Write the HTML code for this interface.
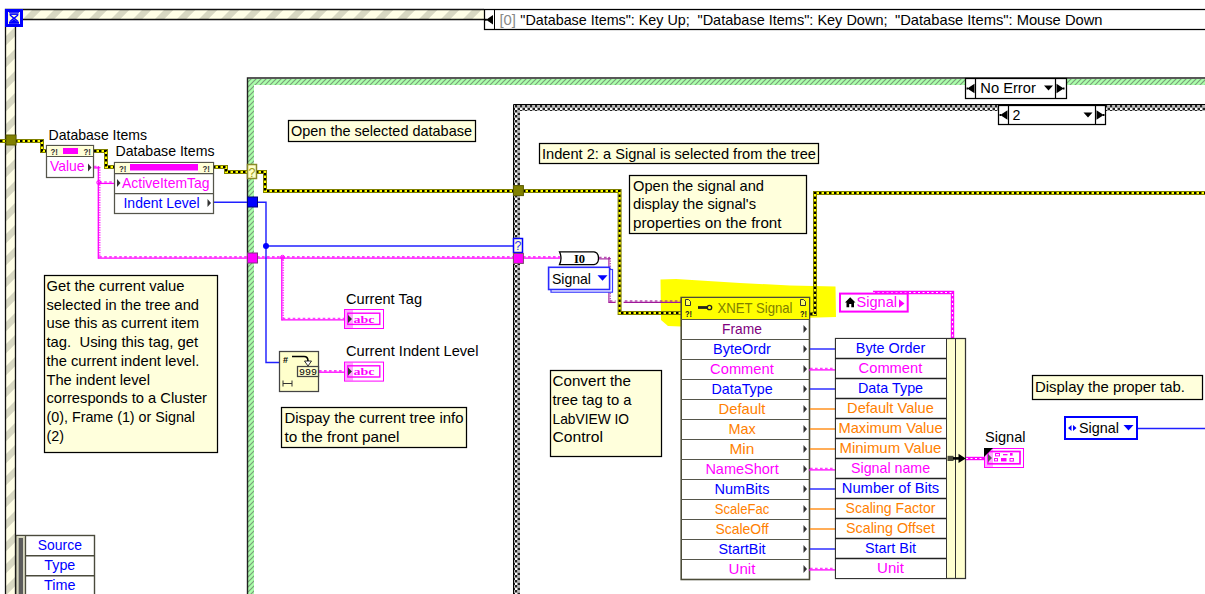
<!DOCTYPE html>
<html lang="en"><head><meta charset="utf-8"><title>Block diagram</title>
<style>html,body{margin:0;padding:0;background:#fff;overflow:hidden}svg{display:block}text{font-family:"Liberation Sans", sans-serif;white-space:pre}</style>
</head><body>
<svg width="1205" height="594" viewBox="0 0 1205 594">
<defs>
<pattern id="ev" patternUnits="userSpaceOnUse" width="22" height="22"><rect width="22" height="22" fill="#fffee6"/><path d="M0 0 H7.3 L0 7.3 Z M20 0 H22 V7.3 L7.3 22 H0 V20 Z M22 20 V22 H20 Z" fill="#d8d8c2"/></pattern>
<pattern id="gr" patternUnits="userSpaceOnUse" width="5" height="5"><rect width="5" height="5" fill="#aaffaa"/><path d="M-1 6 L6 -1 M-1 1 L1 -1 M4 6 L6 4" stroke="#7a9e7a" stroke-width="1.15"/></pattern>
<pattern id="ck" patternUnits="userSpaceOnUse" width="5" height="5"><rect width="5" height="5" fill="#fff"/><rect x="0" y="0" width="2.5" height="2.5" fill="#222"/><rect x="2.5" y="2.5" width="2.5" height="2.5" fill="#222"/><rect x="2.5" y="0" width="2.5" height="2.5" fill="#bbb"/></pattern>
</defs>
<rect width="1205" height="594" fill="#fff"/>
<path d="M660.5 279.5 L676 279 L700 280.5 L740 283 L790 285.5 L835.5 286.5 L836 317 L800 318 L740 321 L700 324.5 L681 326.5 L668 326 L661 320 Z" fill="#ffff00"/>
<rect x="6" y="10" width="478" height="9" fill="url(#ev)" />
<rect x="6" y="10" width="9" height="584" fill="url(#ev)" />
<path d="M5.5 594 V9.5 H484" stroke="#111" stroke-width="1.3" fill="none" />
<path d="M15.5 594 V19.5 H484" stroke="#111" stroke-width="1.3" fill="none" />
<rect x="5" y="9" width="18" height="18" fill="#0000ff" />
<rect x="8" y="12" width="12" height="12" fill="#ffffd8" />
<rect x="9" y="12" width="10" height="0.8" fill="#0000ff" />
<rect x="9.5" y="13.3" width="9" height="1.6" fill="#0000ff" />
<path d="M10 15 L14 18.3 L18 15 M14 18 L10 21.5 M14 18 L18 21.5" stroke="#0000ff" stroke-width="1.4" fill="none"/>
<path d="M14 19 L17.5 22 H10.5 Z" fill="#0000ff"/>
<rect x="9" y="21.6" width="10" height="2.2" fill="#0000ff" />
<rect x="484.5" y="9.5" width="725" height="20" fill="#fff" stroke="#000" stroke-width="1.25" />
<path d="M494.5 9.5 V29.5" stroke="#000" stroke-width="1" fill="none" />
<path d="M493 15 V24.400 L486.8 20.2 V20.700 H485 V18.700 H486.8 V19.2 Z" fill="#000"/>
<text x="499.5" y="25" fill="#888" font-size="14.6" textLength="16.5" lengthAdjust="spacingAndGlyphs" >[0]</text>
<text x="520.3" y="25" fill="#000" font-size="14.6" textLength="169.5" lengthAdjust="spacingAndGlyphs" >"Database Items": Key Up;</text>
<text x="697.5" y="25" fill="#000" font-size="14.6" textLength="190" lengthAdjust="spacingAndGlyphs" >"Database Items": Key Down;</text>
<text x="895" y="25" fill="#000" font-size="14.6" textLength="207.5" lengthAdjust="spacingAndGlyphs" >"Database Items": Mouse Down</text>
<rect x="248" y="79" width="960" height="6" fill="url(#gr)" />
<rect x="248" y="79" width="6" height="520" fill="url(#gr)" />
<path d="M247.5 594 V78 H1205" stroke="#222" stroke-width="1.4" fill="none" />
<rect x="965.5" y="78.5" width="101" height="20" fill="#fff" stroke="#000" stroke-width="1.25" />
<path d="M975.5 78 V99 M1055.5 78 V99" stroke="#000" stroke-width="1.2" fill="none" />
<path d="M974.5 83.800 V93.200 L968 88.9 V89.500 H966.5 V87.500 H968 V88.100 Z M1056.5 83.800 V93.200 L1063 88.9 V89.500 H1064.5 V87.500 H1063 V88.100 Z M1044 85.500 H1053 L1048.5 90.5 Z" fill="#000"/>
<text x="980.3" y="93.4" fill="#000" font-size="14.6" textLength="55.5" lengthAdjust="spacingAndGlyphs" >No Error</text>
<rect x="514" y="105" width="700" height="6" fill="url(#ck)" />
<rect x="514" y="105" width="6" height="500" fill="url(#ck)" />
<path d="M513.5 594 V104.5 H1205" stroke="#000" stroke-width="1" fill="none" />
<rect x="998.5" y="105.5" width="107" height="19" fill="#fff" stroke="#000" stroke-width="1.25" />
<path d="M1008.5 105 V125 M1095.500 105 V125" stroke="#000" stroke-width="1.2" fill="none" />
<path d="M1007.5 110.3 V119.7 L1001 115.4 V116 H999.5 V114 H1001 V114.6 Z M1096.5 110.3 V119.7 L1103 115.4 V116 H1104.5 V114 H1103 V114.6 Z M1083.5 112.5 H1092.5 L1088 117.5 Z" fill="#000"/>
<text x="1012.5" y="120.3" fill="#000" font-size="14.6" textLength="7.9" lengthAdjust="spacingAndGlyphs" >2</text>
<path d="M0 141 H42 V151 H47" stroke="#808000" stroke-width="4" fill="none" stroke-linejoin="miter"/>
<path d="M0 141 H42 V151 H47" stroke="#ffff00" stroke-width="2" fill="none" />
<path d="M0 141 H42 V151 H47" stroke="#000" stroke-width="2" fill="none" stroke-dasharray="2.5 2.5"/>
<path d="M94 151 H106 V167 H114" stroke="#808000" stroke-width="4" fill="none" stroke-linejoin="miter"/>
<path d="M94 151 H106 V167 H114" stroke="#ffff00" stroke-width="2" fill="none" />
<path d="M94 151 H106 V167 H114" stroke="#000" stroke-width="2" fill="none" stroke-dasharray="2.5 2.5"/>
<path d="M213 167 H226 V172 H247" stroke="#808000" stroke-width="4" fill="none" stroke-linejoin="miter"/>
<path d="M213 167 H226 V172 H247" stroke="#ffff00" stroke-width="2" fill="none" />
<path d="M213 167 H226 V172 H247" stroke="#000" stroke-width="2" fill="none" stroke-dasharray="2.5 2.5"/>
<path d="M256 172 H265 V191 H514" stroke="#808000" stroke-width="4" fill="none" stroke-linejoin="miter"/>
<path d="M256 172 H265 V191 H514" stroke="#ffff00" stroke-width="2" fill="none" />
<path d="M256 172 H265 V191 H514" stroke="#000" stroke-width="2" fill="none" stroke-dasharray="2.5 2.5"/>
<path d="M598.0 258.9 H610.3" stroke="#a0189a" stroke-width="1.1" fill="none"/>
<path d="M599.0 257.5 H609.8" stroke="#a0189a" stroke-width="1.3" stroke-dasharray="2.6 2.4" fill="none" opacity="0.75"/>
<path d="M608.9 257.0 V303.0" stroke="#a0189a" stroke-width="1.1" fill="none"/>
<path d="M610.3 258.0 V301.5" stroke="#a0189a" stroke-width="1.3" stroke-dasharray="1.3 1.2" fill="none" opacity="0.75"/>
<path d="M608.8 302.4 H681.5" stroke="#a0189a" stroke-width="1.1" fill="none"/>
<path d="M609.8 301.0 H681.0" stroke="#a0189a" stroke-width="1.3" stroke-dasharray="2.6 2.4" fill="none" opacity="0.75"/>
<path d="M619.6 294 V308" stroke="#fff" stroke-width="8" fill="none" />
<path d="M523 191 H619.6 V313 H681" stroke="#808000" stroke-width="4" fill="none" stroke-linejoin="miter"/>
<path d="M523 191 H619.6 V313 H681" stroke="#ffff00" stroke-width="2" fill="none" />
<path d="M523 191 H619.6 V313 H681" stroke="#000" stroke-width="2" fill="none" stroke-dasharray="2.5 2.5"/>
<path d="M810 314 H815 V193 H1205" stroke="#808000" stroke-width="4" fill="none" stroke-linejoin="miter"/>
<path d="M810 314 H815 V193 H1205" stroke="#ffff00" stroke-width="2" fill="none" />
<path d="M810 314 H815 V193 H1205" stroke="#000" stroke-width="2" fill="none" stroke-dasharray="2.5 2.5"/>
<rect x="6" y="135" width="10" height="10" fill="#808000" stroke="#5a5a00" stroke-width="1" />
<rect x="513.4" y="185.6" width="10" height="10" fill="#808000" stroke="#5a5a00" stroke-width="1" />
<path d="M93.0 167.9 H99.7" stroke="#ff00ff" stroke-width="1.3" fill="none"/>
<path d="M94.0 166.5 H99.2" stroke="#ff00ff" stroke-width="1.7" stroke-dasharray="2.6 2.4" fill="none" opacity="0.75"/>
<path d="M98.3 166.0 V258.8" stroke="#ff00ff" stroke-width="1.3" fill="none"/>
<path d="M99.7 167.0 V257.3" stroke="#ff00ff" stroke-width="1.7" stroke-dasharray="1.3 1.2" fill="none" opacity="0.75"/>
<path d="M98.2 258.2 H247.5" stroke="#ff00ff" stroke-width="1.3" fill="none"/>
<path d="M99.2 256.8 H247.0" stroke="#ff00ff" stroke-width="1.7" stroke-dasharray="2.6 2.4" fill="none" opacity="0.75"/>
<path d="M98.2 183.4 H114.5" stroke="#ff00ff" stroke-width="1.3" fill="none"/>
<path d="M99.2 182.0 H114.0" stroke="#ff00ff" stroke-width="1.7" stroke-dasharray="2.6 2.4" fill="none" opacity="0.75"/>
<path d="M256.0 258.2 H514.5" stroke="#ff00ff" stroke-width="1.3" fill="none"/>
<path d="M257.0 256.8 H514.0" stroke="#ff00ff" stroke-width="1.7" stroke-dasharray="2.6 2.4" fill="none" opacity="0.75"/>
<path d="M281.8 256.3 V320.5" stroke="#ff00ff" stroke-width="1.3" fill="none"/>
<path d="M283.2 257.3 V319.0" stroke="#ff00ff" stroke-width="1.7" stroke-dasharray="1.3 1.2" fill="none" opacity="0.75"/>
<path d="M281.7 319.9 H344.5" stroke="#ff00ff" stroke-width="1.3" fill="none"/>
<path d="M282.7 318.5 H344.0" stroke="#ff00ff" stroke-width="1.7" stroke-dasharray="2.6 2.4" fill="none" opacity="0.75"/>
<path d="M522.0 258.2 H560.5" stroke="#ff00ff" stroke-width="1.3" fill="none"/>
<path d="M523.0 256.8 H560.0" stroke="#ff00ff" stroke-width="1.7" stroke-dasharray="2.6 2.4" fill="none" opacity="0.75"/>
<path d="M318.0 372.2 H344.5" stroke="#ff00ff" stroke-width="1.3" fill="none"/>
<path d="M319.0 370.8 H344.0" stroke="#ff00ff" stroke-width="1.7" stroke-dasharray="2.6 2.4" fill="none" opacity="0.75"/>
<circle cx="98.8" cy="182.500" r="2" fill="none" stroke="#ff00ff"/>
<circle cx="282.5" cy="257.3" r="2" fill="none" stroke="#ff00ff"/>
<path d="M214 202.3 H247" stroke="#2020ff" stroke-width="1.45" fill="none" />
<path d="M257 202.3 H266 V362.500 H279" stroke="#2020ff" stroke-width="1.45" fill="none" />
<path d="M266 246 H514" stroke="#2020ff" stroke-width="1.45" fill="none" />
<circle cx="266" cy="246" r="3" fill="#0000ff"/>
<path d="M1138 428.500 H1205" stroke="#2020ff" stroke-width="1.45" fill="none" />
<rect x="247.5" y="164.5" width="9" height="14" fill="#ffffc8" stroke="#8a8a28" stroke-width="1.5" />
<text x="252" y="176.5" fill="#9a9a10" font-size="12.5" text-anchor="middle" >?</text>
<rect x="247.5" y="197" width="10" height="10" fill="#0000ff" stroke="#000080" stroke-width="1" />
<rect x="247.5" y="253" width="10" height="10" fill="#ff00ff" stroke="#803080" stroke-width="1" />
<rect x="513.5" y="238.5" width="9" height="14" fill="#ffffd8" stroke="#0000ff" stroke-width="1.5" />
<text x="518" y="250" fill="#3030ff" font-size="12.5" text-anchor="middle" >?</text>
<rect x="513.4" y="253.4" width="10" height="10" fill="#ff00ff" stroke="#7a4a6a" stroke-width="1" />
<text x="48.5" y="140" fill="#000" font-size="14.6" textLength="98.5" lengthAdjust="spacingAndGlyphs" >Database Items</text>
<rect x="46.5" y="145.5" width="47" height="32" fill="#fff" stroke="#55554a" stroke-width="1.25" />
<rect x="47" y="146" width="46" height="10" fill="#ffffd8" />
<path d="M46 156.5 H94" stroke="#55554a" stroke-width="1" fill="none" />
<rect x="63" y="148" width="15" height="6" fill="#ff00ff" />
<text x="50.5" y="155" fill="#333" font-size="9" textLength="7.5" lengthAdjust="spacingAndGlyphs" font-weight="bold" >?!</text>
<text x="83.5" y="155" fill="#333" font-size="9" textLength="7.5" lengthAdjust="spacingAndGlyphs" font-weight="bold" >?!</text>
<text x="50" y="171" fill="#ff00ff" font-size="14.6" textLength="34.5" lengthAdjust="spacingAndGlyphs" >Value</text>
<path d="M88 163.5 V171.500 L91.5 167.500 Z" fill="#333"/>
<text x="115.5" y="156" fill="#000" font-size="14.6" textLength="99" lengthAdjust="spacingAndGlyphs" >Database Items</text>
<rect x="114.5" y="162.5" width="99" height="51" fill="#fff" stroke="#55554a" stroke-width="1.25" />
<rect x="115" y="163" width="98" height="10" fill="#fff" />
<rect x="115" y="163" width="15" height="10" fill="#ffffd8" />
<rect x="198" y="163" width="15" height="10" fill="#ffffd8" />
<path d="M114 173.500 H214 M114 193.500 H214" stroke="#55554a" stroke-width="1.25" fill="none" />
<rect x="130" y="164" width="68" height="6.5" fill="#ff00ff" />
<text x="119" y="171.5" fill="#333" font-size="9" textLength="7.5" lengthAdjust="spacingAndGlyphs" font-weight="bold" >?!</text>
<text x="202.5" y="171.5" fill="#333" font-size="9" textLength="7.5" lengthAdjust="spacingAndGlyphs" font-weight="bold" >?!</text>
<text x="122" y="187.5" fill="#ff00ff" font-size="14.6" textLength="87.5" lengthAdjust="spacingAndGlyphs" >ActiveItemTag</text>
<path d="M117 179 V187 L120.5 183 Z" fill="#333"/>
<text x="123.5" y="207.5" fill="#0000ff" font-size="14.6" textLength="76" lengthAdjust="spacingAndGlyphs" >Indent Level</text>
<path d="M207.5 199 V207 L211 203 Z" fill="#333"/>
<rect x="44.5" y="275.5" width="173" height="177" fill="#ffffdc" stroke="#000" stroke-width="1.25" />
<text x="46.5" y="290.8" fill="#000" font-size="14.6" textLength="138" lengthAdjust="spacingAndGlyphs" >Get the current value</text>
<text x="46.5" y="309.6" fill="#000" font-size="14.6" textLength="152.5" lengthAdjust="spacingAndGlyphs" >selected in the tree and</text>
<text x="46.5" y="328.3" fill="#000" font-size="14.6" textLength="152.5" lengthAdjust="spacingAndGlyphs" >use this as current item</text>
<text x="46.5" y="347.1" fill="#000" font-size="14.6" textLength="151.5" lengthAdjust="spacingAndGlyphs" >tag.  Using this tag, get</text>
<text x="46.5" y="365.8" fill="#000" font-size="14.6" textLength="152.8" lengthAdjust="spacingAndGlyphs" >the current indent level.</text>
<text x="46.5" y="384.6" fill="#000" font-size="14.6" textLength="103.5" lengthAdjust="spacingAndGlyphs" >The indent level</text>
<text x="46.5" y="403.3" fill="#000" font-size="14.6" textLength="160.5" lengthAdjust="spacingAndGlyphs" >corresponds to a Cluster</text>
<text x="46.5" y="422.1" fill="#000" font-size="14.6" textLength="148.5" lengthAdjust="spacingAndGlyphs" >(0), Frame (1) or Signal</text>
<text x="46.5" y="440.8" fill="#000" font-size="14.6" textLength="17.5" lengthAdjust="spacingAndGlyphs" >(2)</text>
<rect x="288.5" y="120.5" width="187" height="21" fill="#ffffdc" stroke="#000" stroke-width="1.25" />
<text x="291" y="136.0" fill="#000" font-size="14.6" textLength="181" lengthAdjust="spacingAndGlyphs" >Open the selected database</text>
<rect x="281.5" y="407.5" width="185" height="40" fill="#ffffdc" stroke="#000" stroke-width="1.25" />
<text x="284.5" y="423.3" fill="#000" font-size="14.6" textLength="179" lengthAdjust="spacingAndGlyphs" >Dispay the current tree info</text>
<text x="284.5" y="441.7" fill="#000" font-size="14.6" textLength="115" lengthAdjust="spacingAndGlyphs" >to the front panel</text>
<rect x="539.5" y="143.5" width="279" height="20" fill="#ffffdc" stroke="#000" stroke-width="1.25" />
<text x="542" y="158.5" fill="#000" font-size="14.6" textLength="274" lengthAdjust="spacingAndGlyphs" >Indent 2: a Signal is selected from the tree</text>
<rect x="629.5" y="175.5" width="177" height="58" fill="#ffffdc" stroke="#000" stroke-width="1.25" />
<text x="633" y="190.5" fill="#000" font-size="14.6" textLength="131" lengthAdjust="spacingAndGlyphs" >Open the signal and</text>
<text x="633" y="209.3" fill="#000" font-size="14.6" textLength="123" lengthAdjust="spacingAndGlyphs" >display the signal's</text>
<text x="633" y="228.1" fill="#000" font-size="14.6" textLength="148.5" lengthAdjust="spacingAndGlyphs" >properties on the front</text>
<rect x="550.5" y="370.5" width="111" height="86" fill="#ffffdc" stroke="#000" stroke-width="1.25" />
<text x="552.5" y="386.0" fill="#000" font-size="14.6" textLength="78.5" lengthAdjust="spacingAndGlyphs" >Convert the</text>
<text x="552.5" y="404.8" fill="#000" font-size="14.6" textLength="79" lengthAdjust="spacingAndGlyphs" >tree tag to a</text>
<text x="552.5" y="423.5" fill="#000" font-size="14.6" textLength="76.5" lengthAdjust="spacingAndGlyphs" >LabVIEW IO</text>
<text x="552.5" y="442.2" fill="#000" font-size="14.6" textLength="50.5" lengthAdjust="spacingAndGlyphs" >Control</text>
<rect x="1032.5" y="375.5" width="170" height="24" fill="#ffffdc" stroke="#000" stroke-width="1.25" />
<text x="1035" y="391.5" fill="#000" font-size="14.6" textLength="150" lengthAdjust="spacingAndGlyphs" >Display the proper tab.</text>
<text x="346" y="303.5" fill="#000" font-size="14.6" textLength="76" lengthAdjust="spacingAndGlyphs" >Current Tag</text>
<rect x="344.5" y="309.5" width="39" height="19" fill="#fff" stroke="#ff00ff" stroke-width="1" />
<rect x="347.8" y="313.2" width="32" height="11.2" fill="#fff" stroke="#ff00ff" stroke-width="1.4" />
<rect x="345" y="310" width="8" height="18" fill="#ff00ff" opacity=".35"/>
<text x="353.5" y="322.6" fill="#ff00ff" font-size="10" textLength="21" lengthAdjust="spacingAndGlyphs" font-weight="bold" style='font-family:"Liberation Serif", serif' >abc</text>
<path d="M348 315 V323 L352 319 Z" fill="#333"/>
<text x="346" y="355.6" fill="#000" font-size="14.6" textLength="132.5" lengthAdjust="spacingAndGlyphs" >Current Indent Level</text>
<rect x="344.5" y="362.1" width="39" height="19" fill="#fff" stroke="#ff00ff" stroke-width="1" />
<rect x="347.8" y="365.8" width="32" height="11.2" fill="#fff" stroke="#ff00ff" stroke-width="1.4" />
<rect x="345" y="362.6" width="8" height="18" fill="#ff00ff" opacity=".35"/>
<text x="353.5" y="375.20000000000005" fill="#ff00ff" font-size="10" textLength="21" lengthAdjust="spacingAndGlyphs" font-weight="bold" style='font-family:"Liberation Serif", serif' >abc</text>
<path d="M348 367.6 V375.6 L352 371.6 Z" fill="#333"/>
<rect x="279.5" y="351.5" width="39" height="40" fill="#ffffcc" stroke="#444" stroke-width="1.25" />
<text x="283" y="363" fill="#000" font-size="9" font-weight="bold" >#</text>
<path d="M292 356.500 H304 Q308 356.500 308 361 V364" stroke="#000" stroke-width="1.6" fill="none" />
<path d="M304.5 361 H311.500 L308 366 Z" fill="#fff" stroke="#000" stroke-width="0.8"/>
<rect x="297.5" y="366.5" width="21" height="10" fill="#ffffcc" stroke="#444" stroke-width="1.25" />
<text x="299" y="375" fill="#000" font-size="9" textLength="18" lengthAdjust="spacingAndGlyphs" style='font-family:"Liberation Mono", monospace' >999</text>
<path d="M283 380.5 V386.5 M292 380.5 V386.5 M283 383.5 H292" stroke="#333" stroke-width="1" fill="none" />
<path d="M559.5 251.8 H594 Q598.5 252.5 598.5 258.2 Q598.5 264 594 264.600 H559.5 Q562.5 258.2 559.5 251.8 Z" fill="#fff" stroke="#000" stroke-width="1.3"/>
<text x="579.5" y="262.5" fill="#000" font-size="12.5" text-anchor="middle" font-weight="bold" style='font-family:"Liberation Serif", serif' >I0</text>
<rect x="551" y="269.5" width="61.5" height="22.7" fill="#fff" stroke="#3a3aff" stroke-width="1.2" />
<rect x="548.6" y="267.3" width="61" height="22.2" fill="#fff" stroke="#2a2aff" stroke-width="1.6" />
<text x="552" y="283.5" fill="#000" font-size="14.6" textLength="39" lengthAdjust="spacingAndGlyphs" >Signal</text>
<path d="M597.500 275.3 H607.500 L602.5 280.8 Z" fill="#0000ff"/>
<rect x="681.2" y="297.5" width="128.29999999999995" height="282" fill="#fff" stroke="#4c4c38" stroke-width="1.6" />
<rect x="682" y="298" width="127" height="21" fill="#ffff00" />
<path d="M681 319.5 H810" stroke="#55554a" stroke-width="1" fill="none" />
<text x="722.0" y="333.5" fill="#800080" font-size="14.6" textLength="39.9" lengthAdjust="spacingAndGlyphs" >Frame</text>
<path d="M803.500 325 V333 L807 329 Z" fill="#333"/>
<path d="M681 339.5 H810" stroke="#55554a" stroke-width="1" fill="none" />
<text x="713.1" y="353.5" fill="#0000ff" font-size="14.6" textLength="57.8" lengthAdjust="spacingAndGlyphs" >ByteOrdr</text>
<path d="M803.500 345 V353 L807 349 Z" fill="#333"/>
<path d="M681 359.5 H810" stroke="#55554a" stroke-width="1" fill="none" />
<text x="710.1" y="373.5" fill="#ff00ff" font-size="14.6" textLength="63.7" lengthAdjust="spacingAndGlyphs" >Comment</text>
<path d="M803.500 365 V373 L807 369 Z" fill="#333"/>
<path d="M681 379.5 H810" stroke="#55554a" stroke-width="1" fill="none" />
<text x="711.5" y="393.5" fill="#0000ff" font-size="14.6" textLength="61.1" lengthAdjust="spacingAndGlyphs" >DataType</text>
<path d="M803.500 385 V393 L807 389 Z" fill="#333"/>
<path d="M681 399.5 H810" stroke="#55554a" stroke-width="1" fill="none" />
<text x="718.6" y="413.5" fill="#ff8000" font-size="14.6" textLength="46.7" lengthAdjust="spacingAndGlyphs" >Default</text>
<path d="M803.500 405 V413 L807 409 Z" fill="#333"/>
<path d="M681 419.5 H810" stroke="#55554a" stroke-width="1" fill="none" />
<text x="728.4" y="433.5" fill="#ff8000" font-size="14.6" textLength="27.3" lengthAdjust="spacingAndGlyphs" >Max</text>
<path d="M803.500 425 V433 L807 429 Z" fill="#333"/>
<path d="M681 439.5 H810" stroke="#55554a" stroke-width="1" fill="none" />
<text x="729.5" y="453.5" fill="#ff8000" font-size="14.6" textLength="24.9" lengthAdjust="spacingAndGlyphs" >Min</text>
<path d="M803.500 445 V453 L807 449 Z" fill="#333"/>
<path d="M681 459.5 H810" stroke="#55554a" stroke-width="1" fill="none" />
<text x="705.4" y="473.5" fill="#ff00ff" font-size="14.6" textLength="73.3" lengthAdjust="spacingAndGlyphs" >NameShort</text>
<path d="M803.500 465 V473 L807 469 Z" fill="#333"/>
<path d="M681 479.5 H810" stroke="#55554a" stroke-width="1" fill="none" />
<text x="714.5" y="493.5" fill="#0000ff" font-size="14.6" textLength="54.9" lengthAdjust="spacingAndGlyphs" >NumBits</text>
<path d="M803.500 485 V493 L807 489 Z" fill="#333"/>
<path d="M681 499.5 H810" stroke="#55554a" stroke-width="1" fill="none" />
<text x="714.8" y="513.5" fill="#ff8000" font-size="14.6" textLength="54.5" lengthAdjust="spacingAndGlyphs" >ScaleFac</text>
<path d="M803.500 505 V513 L807 509 Z" fill="#333"/>
<path d="M681 519.5 H810" stroke="#55554a" stroke-width="1" fill="none" />
<text x="715.4" y="533.5" fill="#ff8000" font-size="14.6" textLength="53.3" lengthAdjust="spacingAndGlyphs" >ScaleOff</text>
<path d="M803.500 525 V533 L807 529 Z" fill="#333"/>
<path d="M681 539.5 H810" stroke="#55554a" stroke-width="1" fill="none" />
<text x="718.5" y="553.5" fill="#0000ff" font-size="14.6" textLength="47.1" lengthAdjust="spacingAndGlyphs" >StartBit</text>
<path d="M803.500 545 V553 L807 549 Z" fill="#333"/>
<path d="M681 559.5 H810" stroke="#55554a" stroke-width="1" fill="none" />
<text x="728.6" y="573.5" fill="#ff00ff" font-size="14.6" textLength="26.8" lengthAdjust="spacingAndGlyphs" >Unit</text>
<path d="M803.500 565 V573 L807 569 Z" fill="#333"/>
<text x="717.5" y="312.5" fill="#808000" font-size="14.6" textLength="75" lengthAdjust="spacingAndGlyphs" >XNET Signal</text>
<path d="M698 307.500 H707" stroke="#222" stroke-width="2.8" fill="none" />
<circle cx="709.500" cy="307.500" r="2.2" fill="#ffff00" stroke="#222" stroke-width="1.3"/>
<path d="M685.5 299.500 H688.5 L690.5 301.500 V305.500 H685.5 Z" fill="#ffff60" stroke="#333" stroke-width="1"/>
<text x="685" y="317" fill="#222" font-size="9" textLength="7" lengthAdjust="spacingAndGlyphs" font-weight="bold" >?!</text>
<path d="M800.5 299.500 H803.5 L805.5 301.500 V305.500 H800.5 Z" fill="#ffff60" stroke="#333" stroke-width="1"/>
<text x="800" y="317" fill="#222" font-size="9" textLength="7" lengthAdjust="spacingAndGlyphs" font-weight="bold" >?!</text>
<path d="M810 349 H836" stroke="#2020ff" stroke-width="1.4" fill="none" />
<path d="M809.0 369.9 H836.5" stroke="#ff00ff" stroke-width="1.3" fill="none"/>
<path d="M810.0 368.5 H836.0" stroke="#ff00ff" stroke-width="1.7" stroke-dasharray="2.6 2.4" fill="none" opacity="0.75"/>
<path d="M810 389 H836" stroke="#2020ff" stroke-width="1.4" fill="none" />
<path d="M810 409 H836" stroke="#ff8a10" stroke-width="1.4" fill="none" />
<path d="M810 429 H836" stroke="#ff8a10" stroke-width="1.4" fill="none" />
<path d="M810 449 H836" stroke="#ff8a10" stroke-width="1.4" fill="none" />
<path d="M809.0 469.9 H836.5" stroke="#ff00ff" stroke-width="1.3" fill="none"/>
<path d="M810.0 468.5 H836.0" stroke="#ff00ff" stroke-width="1.7" stroke-dasharray="2.6 2.4" fill="none" opacity="0.75"/>
<path d="M810 489 H836" stroke="#2020ff" stroke-width="1.4" fill="none" />
<path d="M810 509 H836" stroke="#ff8a10" stroke-width="1.4" fill="none" />
<path d="M810 529 H836" stroke="#ff8a10" stroke-width="1.4" fill="none" />
<path d="M810 549 H836" stroke="#2020ff" stroke-width="1.4" fill="none" />
<path d="M809.0 569.9 H836.5" stroke="#ff00ff" stroke-width="1.3" fill="none"/>
<path d="M810.0 568.5 H836.0" stroke="#ff00ff" stroke-width="1.7" stroke-dasharray="2.6 2.4" fill="none" opacity="0.75"/>
<path d="M873 292.500 H952.5 V338" stroke="#ff00ff" stroke-width="3.4" fill="none" />
<path d="M873 292.500 H952.5 V338" stroke="#fff" stroke-width="1.2" fill="none" stroke-dasharray="2 2.5"/>
<rect x="840" y="293.6" width="67.7" height="18" fill="#fff" stroke="#ff00ff" stroke-width="2" />
<path d="M845 302.5 L850.2 297.300 L855.500 302.5 H854 V307.2 H851.3 V304 H849.2 V307.2 H846.5 V302.5 Z" fill="#000"/>
<text x="856.5" y="307.3" fill="#ff00ff" font-size="14.6" textLength="40.5" lengthAdjust="spacingAndGlyphs" >Signal</text>
<path d="M899 299.300 V307.700 L904.5 303.5 Z" fill="#ff00ff"/>
<rect x="835.5" y="338.5" width="130" height="240" fill="#ffffd0" stroke="#333" stroke-width="1.25" />
<rect x="836" y="339" width="110" height="239" fill="#fff" />
<path d="M946.5 338 V579 M955.5 338 V579" stroke="#333" stroke-width="1" fill="none" />
<text x="855.8" y="352.5" fill="#0000ff" font-size="14.6" textLength="69.5" lengthAdjust="spacingAndGlyphs" >Byte Order</text>
<path d="M835 358.5 H946" stroke="#222" stroke-width="1.4" fill="none" />
<text x="858.6" y="372.5" fill="#ff00ff" font-size="14.6" textLength="63.7" lengthAdjust="spacingAndGlyphs" >Comment</text>
<path d="M835 378.5 H946" stroke="#222" stroke-width="1.4" fill="none" />
<text x="858.0" y="392.5" fill="#0000ff" font-size="14.6" textLength="65.1" lengthAdjust="spacingAndGlyphs" >Data Type</text>
<path d="M835 398.5 H946" stroke="#222" stroke-width="1.4" fill="none" />
<text x="847.1" y="412.5" fill="#ff8000" font-size="14.6" textLength="86.7" lengthAdjust="spacingAndGlyphs" >Default Value</text>
<path d="M835 418.5 H946" stroke="#222" stroke-width="1.4" fill="none" />
<text x="838.4" y="432.5" fill="#ff8000" font-size="14.6" textLength="104.3" lengthAdjust="spacingAndGlyphs" >Maximum Value</text>
<path d="M835 438.5 H946" stroke="#222" stroke-width="1.4" fill="none" />
<text x="839.5" y="452.5" fill="#ff8000" font-size="14.6" textLength="101.9" lengthAdjust="spacingAndGlyphs" >Minimum Value</text>
<path d="M835 458.5 H946" stroke="#222" stroke-width="1.4" fill="none" />
<text x="851.0" y="472.5" fill="#ff00ff" font-size="14.6" textLength="79.1" lengthAdjust="spacingAndGlyphs" >Signal name</text>
<path d="M835 478.5 H946" stroke="#222" stroke-width="1.4" fill="none" />
<text x="841.8" y="492.5" fill="#0000ff" font-size="14.6" textLength="97.4" lengthAdjust="spacingAndGlyphs" >Number of Bits</text>
<path d="M835 498.5 H946" stroke="#222" stroke-width="1.4" fill="none" />
<text x="845.5" y="512.5" fill="#ff8000" font-size="14.6" textLength="89.9" lengthAdjust="spacingAndGlyphs" >Scaling Factor</text>
<path d="M835 518.5 H946" stroke="#222" stroke-width="1.4" fill="none" />
<text x="846.0" y="532.5" fill="#ff8000" font-size="14.6" textLength="88.9" lengthAdjust="spacingAndGlyphs" >Scaling Offset</text>
<path d="M835 538.5 H946" stroke="#222" stroke-width="1.4" fill="none" />
<text x="865.0" y="552.5" fill="#0000ff" font-size="14.6" textLength="51.1" lengthAdjust="spacingAndGlyphs" >Start Bit</text>
<path d="M835 558.5 H946" stroke="#222" stroke-width="1.4" fill="none" />
<text x="877.1" y="572.5" fill="#ff00ff" font-size="14.6" textLength="26.8" lengthAdjust="spacingAndGlyphs" >Unit</text>
<path d="M947.5 455.800 H953.5 V461 H947.5 Z" fill="#4a4a3c"/>
<path d="M953 458.400 H960" stroke="#000" stroke-width="2.6" fill="none" />
<path d="M958.5 453.800 L965.8 458.400 L958.5 463 Z" fill="#000"/>
<path d="M966 458.500 H985" stroke="#ff00ff" stroke-width="3.4" fill="none" />
<path d="M966 458.500 H985" stroke="#fff" stroke-width="1.2" fill="none" stroke-dasharray="2 2.5"/>
<text x="985" y="442.3" fill="#000" font-size="14.6" textLength="40.5" lengthAdjust="spacingAndGlyphs" >Signal</text>
<rect x="984.5" y="448.5" width="39" height="19" fill="#fff" stroke="#ff00ff" stroke-width="1" />
<rect x="988" y="451.5" width="32" height="12.3" fill="#fff" stroke="#ff00ff" stroke-width="1.7" />
<rect x="985" y="449" width="8" height="18" fill="#ff00ff" opacity=".35"/>
<rect x="995.5" y="453.5" width="4" height="2.4" fill="#fff" stroke="#ff00ff" stroke-width="1" />
<rect x="1003" y="454" width="4.5" height="1.3" fill="#ff00ff" />
<rect x="1010" y="453" width="2.6" height="2.6" fill="#ff00ff" />
<rect x="994.5" y="458.5" width="3" height="2.4" fill="#fff" stroke="#ff00ff" stroke-width="1" />
<rect x="1001" y="458" width="5.5" height="3.4" fill="#ff00ff" />
<rect x="1010" y="458.5" width="3.4" height="2.6" fill="#fff" stroke="#ff00ff" stroke-width="1" />
<path d="M984 448 H993 L984 457 Z" fill="#000"/>
<path d="M988 454 V462 L992 458 Z" fill="#555"/>
<rect x="1065" y="417" width="72" height="22" fill="#fff" stroke="#0000ff" stroke-width="2" />
<text x="1079" y="433" fill="#000" font-size="14.6" textLength="40" lengthAdjust="spacingAndGlyphs" >Signal</text>
<path d="M1068 428 L1071.500 425 V431 Z M1076.500 428 L1073 425 V431 Z M1123.5 425 H1133.5 L1128.500 430.5 Z" fill="#0000ff"/>
<rect x="16.5" y="535.5" width="78" height="64" fill="#fff" stroke="#4a4a3c" stroke-width="1.4" />
<rect x="16.5" y="536.2" width="9" height="60" fill="#d6d6be" />
<rect x="18.7" y="538" width="4.3" height="60" fill="#5c5c5c" />
<path d="M25.500 535 V594" stroke="#4a4a3c" stroke-width="1.3" fill="none" />
<text x="37.8" y="550" fill="#0000ff" font-size="14.6" textLength="44.1" lengthAdjust="spacingAndGlyphs" >Source</text>
<path d="M25.5 555.8 H95" stroke="#4a4a3c" stroke-width="1.5" fill="none" />
<text x="44.3" y="570" fill="#0000ff" font-size="14.6" textLength="31.0" lengthAdjust="spacingAndGlyphs" >Type</text>
<path d="M25.5 575.8 H95" stroke="#4a4a3c" stroke-width="1.5" fill="none" />
<text x="44.0" y="590" fill="#0000ff" font-size="14.6" textLength="31.5" lengthAdjust="spacingAndGlyphs" >Time</text>
</svg>
</body></html>
